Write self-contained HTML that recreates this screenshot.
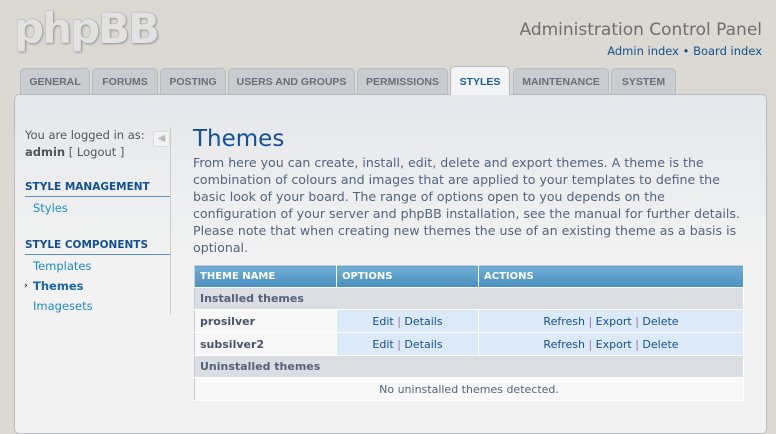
<!DOCTYPE html>
<html><head><meta charset="utf-8"><style>
*{margin:0;padding:0;box-sizing:border-box}
body{width:776px;height:422px;overflow:hidden;background:#dcd9d2;font-family:"DejaVu Sans",Verdana,sans-serif;position:relative}
.logo{position:absolute;left:14px;top:4px;font:bold 42px "DejaVu Sans",sans-serif;color:#e2e2e2;letter-spacing:-2px;text-shadow:0 0 1px #777,1px 1px 2px #999}
.acp{position:absolute;right:14px;top:20px;font-size:17px;color:#6f6f6f}
.links{position:absolute;right:14px;top:44px;font-size:11.5px;color:#105289}
.tabs{position:absolute;left:20px;top:68px;height:26px}
.tab{position:absolute;top:0;height:26px;background:#c9ccd1;border:1px solid #b7bac0;border-bottom:none;border-radius:5px 5px 0 0;font:bold 10.5px "Liberation Sans",Arial,sans-serif;color:#6a6f77;text-align:center;line-height:26px}
.tab.on{background:#f3f4f6;color:#1a5d9c;top:-2px;height:29px;line-height:30px}
.panel{position:absolute;left:14px;top:94px;width:753px;height:340px;border:1px solid #b7bac0;border-radius:5px;background:linear-gradient(#e4e7eb,#f2f2f2 160px)}
.side{position:absolute;left:25px;top:127px;width:145px;font-size:11.5px;color:#555}
.vline{position:absolute;left:170px;top:127px;width:1px;height:188px;background:#ccc}
.coll{position:absolute;left:153px;top:131px;width:17px;height:16px;background:#f3f3f3;border:1px solid #ddd;color:#bbb;font-size:10px;text-align:center;line-height:14px}
.h{font:bold 10.5px "DejaVu Sans",sans-serif;color:#115098;border-bottom:1px solid #5a91c6;padding-bottom:3px;position:absolute;left:0;width:145px}
.a{color:#1d8acb;position:absolute;left:8px}
h1{position:absolute;left:193px;top:126px;font:normal 23px "DejaVu Sans",sans-serif;color:#115098}
.intro{position:absolute;left:193px;top:154px;width:570px;font-size:12.6px;line-height:17px;color:#536482;white-space:nowrap}
table{position:absolute;left:194px;top:265px;width:550px;border-collapse:collapse;font-size:11px;border:1px solid #ccd}
th{background:linear-gradient(#70aed3,#4b8fbf);color:#fff;font-size:10px;text-align:left;padding:0 5px;height:22px;border-right:1px solid #fff;border-bottom:1px solid #fff}
td{height:23px;border-right:1px solid #fff;border-bottom:1px solid #fff;color:#105289}
td.c{background:#dbe9f9;text-align:center}
td.n{background:#f8f8f8;color:#47536b;font-weight:bold;padding-left:5px}
td.g{background:#dadde1;color:#54627a;font-weight:bold;padding-left:5px;height:22px}
td.e{background:#f8f8f8;text-align:center;color:#54627a}
.p{color:#aa6da8}
</style></head><body>
<div class="logo">phpBB</div>
<div class="acp">Administration Control Panel</div>
<div class="links">Admin index • Board index</div>
<div class="panel"></div>
<div class="tabs">
<div class="tab" style="left:0;width:70px">GENERAL</div>
<div class="tab" style="left:72px;width:66px">FORUMS</div>
<div class="tab" style="left:140px;width:66px">POSTING</div>
<div class="tab" style="left:208px;width:127px">USERS AND GROUPS</div>
<div class="tab" style="left:337px;width:91px">PERMISSIONS</div>
<div class="tab on" style="left:430px;width:60px">STYLES</div>
<div class="tab" style="left:493px;width:96px">MAINTENANCE</div>
<div class="tab" style="left:591px;width:65px">SYSTEM</div>
</div>
<div class="coll">◀</div>
<div class="vline"></div>
<div class="side">
<div style="position:absolute;top:1px">You are logged in as:</div>
<div style="position:absolute;top:18px"><b>admin</b> [ Logout ]</div>
<div class="h" style="top:54px">STYLE MANAGEMENT</div>
<div class="a" style="top:74px">Styles</div>
<div class="h" style="top:112px">STYLE COMPONENTS</div>
<div class="a" style="top:132px">Templates</div>
<div class="a" style="top:152px;font-weight:bold;color:#1767a8"><span style="position:absolute;left:-9px;color:#222;font-size:9px;top:2px">›</span>Themes</div>
<div class="a" style="top:172px">Imagesets</div>
</div>
<h1>Themes</h1>
<div class="intro">From here you can create, install, edit, delete and export themes. A theme is the<br>combination of colours and images that are applied to your templates to define the<br>basic look of your board. The range of options open to you depends on the<br>configuration of your server and phpBB installation, see the manual for further details.<br>Please note that when creating new themes the use of an existing theme as a basis is<br>optional.</div>
<table>
<tr><th style="width:142px">THEME NAME</th><th style="width:142px">OPTIONS</th><th>ACTIONS</th></tr>
<tr><td class="g" colspan="3">Installed themes</td></tr>
<tr><td class="n">prosilver</td><td class="c">Edit <span class="p">|</span> Details</td><td class="c">Refresh <span class="p">|</span> Export <span class="p">|</span> Delete</td></tr>
<tr><td class="n">subsilver2</td><td class="c">Edit <span class="p">|</span> Details</td><td class="c">Refresh <span class="p">|</span> Export <span class="p">|</span> Delete</td></tr>
<tr><td class="g" colspan="3">Uninstalled themes</td></tr>
<tr><td class="e" colspan="3">No uninstalled themes detected.</td></tr>
</table>
</body></html>
